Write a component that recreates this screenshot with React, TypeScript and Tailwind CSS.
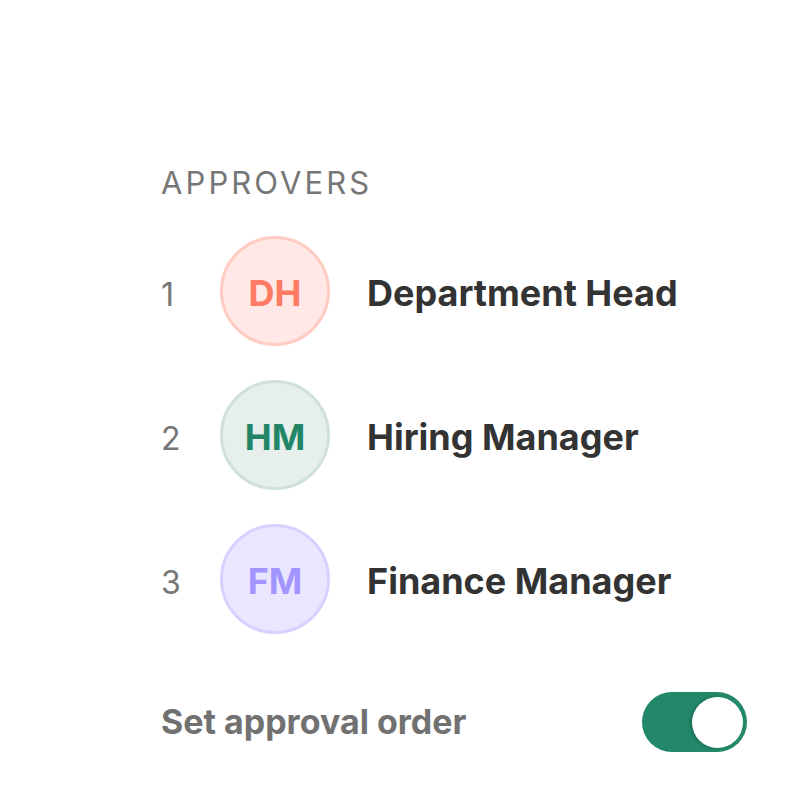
import React from "react";

const rows = [
  { n: "1", init: "DH", name: "Department Head", bg: "bg-[#ffe8e5]", border: "border-[#ffcbc2]", text: "text-[#ff7b63]" },
  { n: "2", init: "HM", name: "Hiring Manager", bg: "bg-[#e6efec]", border: "border-[#cfe1da]", text: "text-[#218566]" },
  { n: "3", init: "FM", name: "Finance Manager", bg: "bg-[#ebe6ff]", border: "border-[#d9d0ff]", text: "text-[#a395ff]" },
];

export default function App() {
  return (
    <div className="w-[812px] h-[812px] bg-white font-['Inter',sans-serif] pl-[161px] pt-[165px]">
      <div className="text-[31px] leading-[36px] tracking-[0.1em] text-[#767676]">APPROVERS</div>
      <div className="flex flex-col gap-[34px] mt-[35px]">
        {rows.map((r) => (
          <div key={r.n} className="flex items-center h-[110px]">
            <div className="w-[59px] mt-[7px] text-[32px] leading-none text-[#767676]">{r.n}</div>
            <div className={`w-[110px] h-[110px] rounded-full border-[3px] ${r.bg} ${r.border} flex items-center justify-center`}>
              <span className={`mt-[4px] text-[36px] leading-none font-bold ${r.text}`}>{r.init}</span>
            </div>
            <div className="ml-[37px] mt-[4px] text-[36px] leading-none font-bold text-[#333333]">{r.name}</div>
          </div>
        ))}
      </div>
      <div className="flex items-center justify-between w-[586px] mt-[58px] h-[60px]">
        <div className="text-[34px] leading-[60px] font-bold text-[#717171]">Set approval order</div>
        <div className="w-[105px] h-[60px] rounded-full bg-[#23876a] flex items-center justify-end pr-[4px]">
          <div className="w-[51px] h-[51px] rounded-full bg-white shadow-[-2px_0_3px_rgba(0,0,0,0.18)]" />
        </div>
      </div>
    </div>
  );
}
